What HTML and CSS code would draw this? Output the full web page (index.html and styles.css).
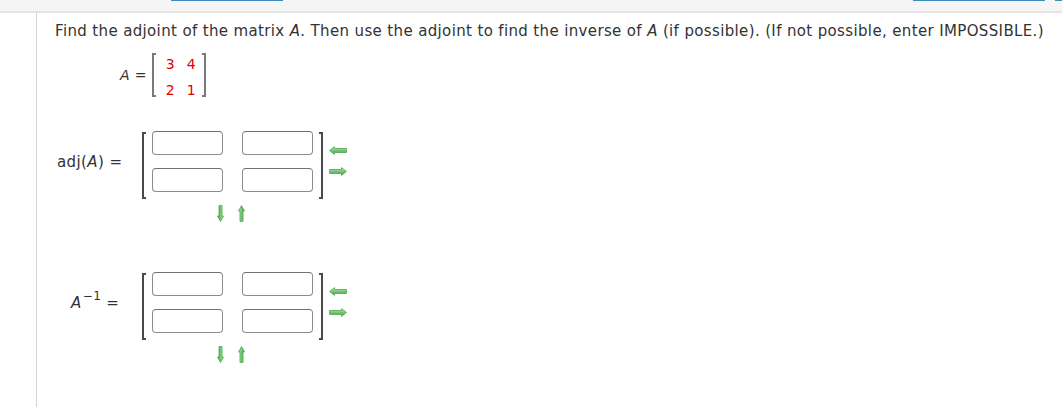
FILE: index.html
```html
<!DOCTYPE html>
<html lang="en">
<head>
<meta charset="utf-8">
<title>Adjoint and inverse</title>
<link rel="stylesheet" href="styles.css">
</head>
<body>
<div class="topbar">
  <span class="sp sp1"></span><span class="tabline tl1"></span>
  <span class="sp sp2"></span><span class="tabline tl2"></span>
  <span class="sp sp3"></span><span class="tabline tl3"></span>
</div>
<div class="page">
  <div class="gutter"></div>
  <div class="content">
    <p class="prompt">Find the adjoint of the matrix <i>A</i>. Then use the adjoint to find the inverse of <i>A</i> (if possible). (If not possible, enter IMPOSSIBLE.)</p>

    <div class="given">
      <span class="given-label"><i>A</i> =</span>
      <span class="sbr sbr-l"></span>
      <div class="given-grid">
        <span>3</span><span>4</span>
        <span>2</span><span>1</span>
      </div>
      <span class="sbr sbr-r"></span>
    </div>

    <div class="answer answer1">
      <div class="answer-row">
        <div class="label">adj(<i>A</i>) =</div>
        <div class="bmatrix">
          <span class="bbr bbr-l"></span>
          <div class="cells">
            <input class="cell" type="text"><input class="cell" type="text">
            <input class="cell" type="text"><input class="cell" type="text">
          </div>
          <span class="bbr bbr-r"></span>
        </div>
        <div class="hctl">
          <svg class="harrow" width="18" height="9" viewBox="0 0 18 9"><defs><linearGradient id="g1" x1="0" y1="0" x2="0" y2="1"><stop offset="0" stop-color="#c6ebc6"/><stop offset="0.5" stop-color="#74c674"/><stop offset="1" stop-color="#3e9a3e"/></linearGradient></defs><polygon points="0.6,4.5 5.5,0.6 5.5,2.5 17.4,2.5 17.4,6.5 5.5,6.5 5.5,8.4" fill="url(#g1)" stroke="#5aab5a" stroke-width="0.9"/></svg>
          <svg class="harrow" width="18" height="9" viewBox="0 0 18 9"><defs><linearGradient id="g2" x1="0" y1="0" x2="0" y2="1"><stop offset="0" stop-color="#c6ebc6"/><stop offset="0.5" stop-color="#74c674"/><stop offset="1" stop-color="#3e9a3e"/></linearGradient></defs><polygon points="17.4,4.5 12.5,0.6 12.5,2.5 0.6,2.5 0.6,6.5 12.5,6.5 12.5,8.4" fill="url(#g2)" stroke="#5aab5a" stroke-width="0.9"/></svg>
        </div>
      </div>
      <div class="vctl">
        <svg class="varrow" width="7" height="17" viewBox="0 0 7 17"><defs><linearGradient id="g3" x1="0" y1="0" x2="1" y2="0"><stop offset="0" stop-color="#3e9a3e"/><stop offset="0.5" stop-color="#74c674"/><stop offset="1" stop-color="#b8e4b8"/></linearGradient></defs><polygon points="2,0.6 5,0.6 5,11 6.5,11 3.5,16.4 0.5,11 2,11" fill="url(#g3)" stroke="#5aab5a" stroke-width="0.9"/></svg>
        <svg class="varrow" width="7" height="17" viewBox="0 0 7 17"><defs><linearGradient id="g4" x1="0" y1="0" x2="1" y2="0"><stop offset="0" stop-color="#b8e4b8"/><stop offset="0.5" stop-color="#74c674"/><stop offset="1" stop-color="#3e9a3e"/></linearGradient></defs><polygon points="3.5,0.6 6.5,6 5,6 5,16.4 2,16.4 2,6 0.5,6" fill="url(#g4)" stroke="#5aab5a" stroke-width="0.9"/></svg>
      </div>
    </div>

    <div class="answer answer2">
      <div class="answer-row">
        <div class="label label-inv"><i>A</i><sup>&minus;1</sup> =</div>
        <div class="bmatrix">
          <span class="bbr bbr-l"></span>
          <div class="cells">
            <input class="cell" type="text"><input class="cell" type="text">
            <input class="cell" type="text"><input class="cell" type="text">
          </div>
          <span class="bbr bbr-r"></span>
        </div>
        <div class="hctl">
          <svg class="harrow" width="18" height="9" viewBox="0 0 18 9"><defs><linearGradient id="g5" x1="0" y1="0" x2="0" y2="1"><stop offset="0" stop-color="#c6ebc6"/><stop offset="0.5" stop-color="#74c674"/><stop offset="1" stop-color="#3e9a3e"/></linearGradient></defs><polygon points="0.6,4.5 5.5,0.6 5.5,2.5 17.4,2.5 17.4,6.5 5.5,6.5 5.5,8.4" fill="url(#g5)" stroke="#5aab5a" stroke-width="0.9"/></svg>
          <svg class="harrow" width="18" height="9" viewBox="0 0 18 9"><defs><linearGradient id="g6" x1="0" y1="0" x2="0" y2="1"><stop offset="0" stop-color="#c6ebc6"/><stop offset="0.5" stop-color="#74c674"/><stop offset="1" stop-color="#3e9a3e"/></linearGradient></defs><polygon points="17.4,4.5 12.5,0.6 12.5,2.5 0.6,2.5 0.6,6.5 12.5,6.5 12.5,8.4" fill="url(#g6)" stroke="#5aab5a" stroke-width="0.9"/></svg>
        </div>
      </div>
      <div class="vctl">
        <svg class="varrow" width="7" height="17" viewBox="0 0 7 17"><defs><linearGradient id="g7" x1="0" y1="0" x2="1" y2="0"><stop offset="0" stop-color="#3e9a3e"/><stop offset="0.5" stop-color="#74c674"/><stop offset="1" stop-color="#b8e4b8"/></linearGradient></defs><polygon points="2,0.6 5,0.6 5,11 6.5,11 3.5,16.4 0.5,11 2,11" fill="url(#g7)" stroke="#5aab5a" stroke-width="0.9"/></svg>
        <svg class="varrow" width="7" height="17" viewBox="0 0 7 17"><defs><linearGradient id="g8" x1="0" y1="0" x2="1" y2="0"><stop offset="0" stop-color="#b8e4b8"/><stop offset="0.5" stop-color="#74c674"/><stop offset="1" stop-color="#3e9a3e"/></linearGradient></defs><polygon points="3.5,0.6 6.5,6 5,6 5,16.4 2,16.4 2,6 0.5,6" fill="url(#g8)" stroke="#5aab5a" stroke-width="0.9"/></svg>
      </div>
    </div>
  </div>
</div>
</body>
</html>
```

FILE: styles.css
```css
* { box-sizing: border-box; }

html, body {
  margin: 0;
  padding: 0;
  background: #ffffff;
}

body {
  width: 1062px;
  height: 407px;
  overflow: hidden;
  font-family: "DejaVu Sans", Verdana, sans-serif;
  color: #333333;
}

.topbar {
  display: flex;
  align-items: flex-start;
  height: 13px;
  background: #f5f5f5;
  border-bottom: 2px solid #e4e4e4;
}
.sp { flex: none; }
.sp1 { width: 171px; }
.sp2 { width: 630px; }
.sp3 { width: 10px; }
.tabline { flex: none; height: 1px; background: #3b8cc0; }
.tl1 { width: 112px; }
.tl2 { width: 132px; }
.tl3 { flex: 1; }

.page {
  display: flex;
  height: 394px;
}

.gutter {
  width: 37px;
  flex: none;
  border-right: 1px solid #d2d2d2;
}

.content {
  flex: 1;
  padding: 8px 0 0 18px;
}

.prompt {
  margin: 0;
  font-size: 15px;
  line-height: 20px;
  letter-spacing: 0.36px;
  white-space: nowrap;
}

/* given matrix */
.given {
  display: flex;
  align-items: stretch;
  height: 44px;
  margin: 12px 0 0 65px;
  font-size: 14px;
}
.given-label {
  align-self: center;
  margin-right: 5px;
  letter-spacing: 0.3px;
  color: #333;
}
.sbr {
  width: 4px;
  border: 2px solid #7a7a7a;
}
.sbr-l { border-right: none; }
.sbr-r { border-left: none; }
.given-grid {
  display: grid;
  grid-template-columns: 9px 9px;
  grid-template-rows: 26px 16px;
  column-gap: 12px;
  padding: 1px 6px 0 10px;
  line-height: 20px;
  color: #e00000;
}

/* answer matrices */
.answer1 { margin-top: 35px; }
.answer2 { margin-top: 51px; }

.answer-row {
  display: flex;
  align-items: center;
}

.label {
  width: 87px;
  flex: none;
  font-size: 15px;
  line-height: 20px;
  letter-spacing: 0.4px;
  padding-left: 2px;
  margin-bottom: 7px;
}
.label-inv { padding-left: 16px; }
.label-inv sup {
  font-size: 12px;
  vertical-align: 8px;
  line-height: 0;
  margin-left: 1px;
}

.bmatrix {
  display: flex;
  align-items: stretch;
}
.bbr {
  width: 4px;
  border: 2px solid #4a4a4a;
}
.bbr-l { border-right: none; }
.bbr-r { border-left: none; }

.cells {
  display: grid;
  grid-template-columns: 71px 71px;
  grid-template-rows: 24px 24px;
  column-gap: 19px;
  row-gap: 13px;
  padding: 0 6px 7px 6px;
  margin-top: -1px;
}
.cell {
  width: 71px;
  height: 24px;
  margin: 0;
  padding: 0;
  border: 1px solid #8c8c8c;
  border-top-color: #707070;
  border-radius: 4px;
  background: #ffffff;
  font: inherit;
}

.hctl {
  align-self: flex-start;
  display: flex;
  flex-direction: column;
  gap: 12px;
  padding: 14px 0 0 6px;
}
.harrow, .varrow { display: block; }

.vctl {
  display: flex;
  gap: 14px;
  margin: 6px 0 0 162px;
}
```
